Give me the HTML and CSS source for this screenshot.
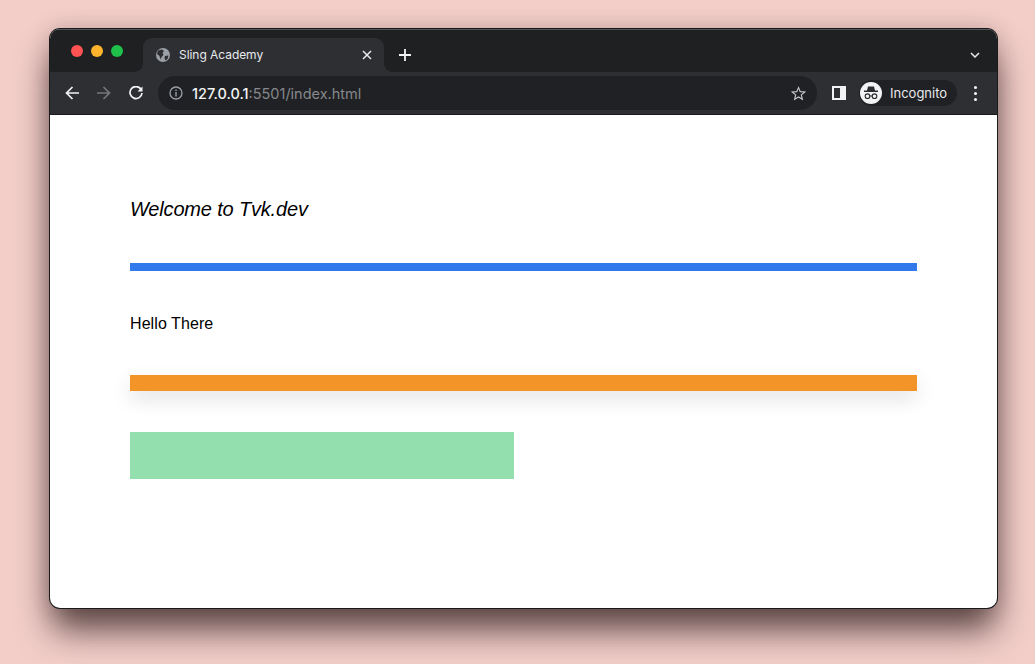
FILE: index.html
```html
<!DOCTYPE html>
<html lang="en">
<head>
	<meta charset="UTF-8">
	<title>Sling Academy</title>
	<link rel="stylesheet" href="styles.css">
</head>
<body>
	<div class="window">
		<!-- tab strip -->
		<div class="tabstrip">
			<div class="lights">
				<span class="light red"></span>
				<span class="light yellow"></span>
				<span class="light green"></span>
			</div>
			<div class="tab">
				<svg class="globe" width="14" height="14" viewBox="0 0 14 14">
					<circle cx="7" cy="7" r="7" fill="#9aa0a6"/>
					<path d="M2 2.5 L6 1.5 L8 3 L6.5 5 L7.5 7 L5.5 9 L4.5 11.5 L3.5 8 L1 6 Z M9 8 L12.5 7.5 L11.5 11 L9.5 12.5 L8.5 10 Z" fill="#2e2f32"/>
				</svg>
				<span class="tab-title">Sling Academy</span>
				<svg class="tab-close" width="10" height="10" viewBox="0 0 10 10">
					<path d="M1 1 L9 9 M9 1 L1 9" stroke="#e8eaed" stroke-width="1.5"/>
				</svg>
			</div>
			<svg class="newtab" width="12" height="12" viewBox="0 0 12 12">
				<path d="M6 0 V12 M0 6 H12" stroke="#f1f3f4" stroke-width="1.8"/>
			</svg>
			<svg class="tabsearch" width="10" height="6" viewBox="0 0 10 6">
				<path d="M1 1 L5 5 L9 1" fill="none" stroke="#e8eaed" stroke-width="1.5"/>
			</svg>
		</div>

		<!-- toolbar -->
		<div class="toolbar">
			<div class="nav">
				<svg width="14" height="14" viewBox="0 0 14 14">
					<path d="M14 7 H2 M7.5 1 L1.5 7 L7.5 13" fill="none" stroke="#f1f3f4" stroke-width="1.7"/>
				</svg>
				<svg width="14" height="14" viewBox="0 0 14 14">
					<path d="M0 7 H12 M6.5 1 L12.5 7 L6.5 13" fill="none" stroke="#74777b" stroke-width="1.7"/>
				</svg>
				<svg width="14" height="14" viewBox="0 0 14 14">
					<path d="M12 3.2 A6 6 0 1 0 13 7" fill="none" stroke="#f1f3f4" stroke-width="1.7"/>
					<path d="M13.5 0.5 V5.5 H8.5 Z" fill="#f1f3f4"/>
				</svg>
			</div>
			<div class="omnibox">
				<svg class="info" width="14" height="14" viewBox="0 0 14 14">
					<circle cx="7" cy="7" r="6" fill="none" stroke="#9aa0a6" stroke-width="1.3"/>
					<path d="M7 6 V10.5 M7 3.5 V5" stroke="#9aa0a6" stroke-width="1.4"/>
				</svg>
				<span class="url"><b>127.0.0.1</b>:5501/index.html</span>
				<svg class="star" width="15" height="15" viewBox="0 0 24 24">
					<path d="M12 2.5 L14.8 9 L22 9.6 L16.5 14.3 L18.2 21.3 L12 17.6 L5.8 21.3 L7.5 14.3 L2 9.6 L9.2 9 Z" fill="none" stroke="#c4c7ca" stroke-width="1.8"/>
				</svg>
			</div>
			<div class="sidepanel"></div>
			<div class="profile">
				<span class="avatar">
					<svg width="22" height="22" viewBox="0 0 22 22">
						<circle cx="11" cy="11" r="11" fill="#f1f3f4"/>
						<path d="M8 4.5 H14 L15 8.5 H18 V10 H4 V8.5 H7 Z" fill="#2b2c30"/>
						<circle cx="7.5" cy="14.2" r="2.3" fill="none" stroke="#2b2c30" stroke-width="1.1"/>
						<circle cx="14.5" cy="14.2" r="2.3" fill="none" stroke="#2b2c30" stroke-width="1.1"/>
						<path d="M9.8 14 H12.2" stroke="#2b2c30" stroke-width="1.1"/>
					</svg>
				</span>
				<span class="profile-name">Incognito</span>
			</div>
			<div class="menu">
				<span></span><span></span><span></span>
			</div>
		</div>

		<!-- page content -->
		<div class="content">
			<p class="welcome">Welcome to Tvk.dev</p>
			<div class="bar bar-blue"></div>
			<p class="hello">Hello There</p>
			<div class="bar bar-orange"></div>
			<div class="bar bar-green"></div>
		</div>
	</div>
</body>
</html>
```

FILE: styles.css
```css
html,body{height:100%;}
body{margin:0;padding:29px 38px 0 50px;box-sizing:border-box;background:#f3cec9;overflow:hidden;font-family:"Inter","Liberation Sans",sans-serif;}
p{margin:0;}

.window{display:flex;flex-direction:column;height:579px;border-radius:10px;background:#fff;box-shadow:0 0 0 1px #1a1a1c,0 0 22px rgba(60,30,30,.22),0 24px 34px -2px rgba(30,15,15,.7);overflow:hidden;}

.tabstrip{position:relative;display:flex;align-items:flex-end;flex:none;height:43px;box-sizing:border-box;background:#1e2022;border-top:1px solid #55565a;}
.lights{display:flex;gap:8px;align-self:flex-start;padding:15px 0 0 21px;box-sizing:border-box;width:93px;}
.light{width:12px;height:12px;border-radius:50%;}
.red{background:#ff5252;}
.yellow{background:#fdb42c;}
.green{background:#1fc14b;}

.tab{position:relative;display:flex;align-items:center;width:241px;height:34px;box-sizing:border-box;padding:0 12px 0 13px;background:#2e2f32;border-radius:9px 9px 0 0;}
.tab::before,.tab::after{content:"";position:absolute;bottom:0;width:8px;height:8px;}
.tab::before{left:-8px;background:radial-gradient(circle at 0 0,#1e2022 7.5px,#2e2f32 8px);}
.tab::after{right:-8px;background:radial-gradient(circle at 100% 0,#1e2022 7.5px,#2e2f32 8px);}
.globe{flex:none;margin-right:9px;}
.tab-title{flex:1;font-size:12px;letter-spacing:-.05px;line-height:14px;padding-bottom:1px;color:#e8eaed;}
.tab-close{flex:none;}
.newtab{align-self:flex-start;margin:19px 0 0 15px;}
.tabsearch{position:absolute;right:17px;top:22px;}

.toolbar{display:flex;align-items:center;flex:none;height:42px;background:#2e2f32;}
.nav{display:flex;gap:18px;padding-left:15px;width:108px;box-sizing:border-box;}
.omnibox{display:flex;align-items:center;width:659px;height:34px;box-sizing:border-box;padding:0 11px;background:#202124;border-radius:17px;}
.info{flex:none;margin-right:9px;}
.url{flex:1;font-size:14.5px;color:#85888c;}
.url b{font-weight:500;color:#f1f3f4;}
.star{flex:none;}
.sidepanel{flex:none;width:14px;height:14px;box-sizing:border-box;margin-left:15px;border:2px solid #f1f3f4;border-right-width:6px;}
.profile{display:flex;align-items:center;gap:8px;width:98px;height:26px;box-sizing:border-box;margin-left:13px;padding-left:1px;background:#202124;border-radius:13px;}
.avatar{display:flex;flex:none;}
.profile-name{font-size:13px;color:#e8eaed;}
.menu{display:flex;flex-direction:column;gap:3px;margin-left:17px;}
.menu span{width:3px;height:3px;border-radius:50%;background:#f1f3f4;}

.content{flex:1;padding:82px 80px 0;border-top:1px solid #1a1a1c;color:#000;font-family:"Liberation Sans",sans-serif;}
.welcome{font-size:20px;line-height:24px;font-style:italic;letter-spacing:-.17px;}
.bar{height:8px;}
.bar-blue{margin-top:42px;background:#3279ec;}
.hello{margin-top:43px;font-size:16px;line-height:20px;letter-spacing:.08px;}
.bar-orange{margin-top:41px;height:16px;background:#f39428;box-shadow:0 8px 20px rgba(0,0,0,.12);}
.bar-green{margin-top:41px;width:384px;height:47px;background:#93dfad;}
```
